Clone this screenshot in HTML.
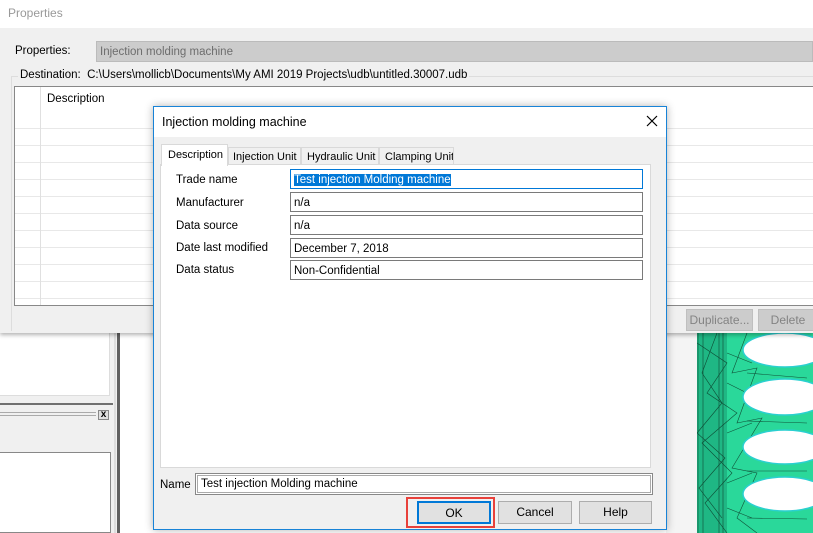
<!DOCTYPE html>
<html><head><style>
*{margin:0;padding:0;box-sizing:border-box}
body{width:813px;height:533px;overflow:hidden;background:#fff;font-family:"Liberation Sans",sans-serif;font-size:11px;color:#000;position:relative}
.a{position:absolute;white-space:nowrap}
.btn{position:absolute;background:#e1e1e1;border:1px solid #adadad;text-align:center;line-height:20px;font-size:12px}
.inp{position:absolute;background:#fff;border:1px solid #7a7a7a;height:20px;font-size:11.5px;line-height:19px;padding-left:3px;white-space:nowrap}
.lbl{position:absolute;font-size:11.5px;white-space:nowrap}
.tab{position:absolute;top:147px;height:18px;border:1px solid #d9d9d9;background:#f0f0f0;font-size:11px;padding:3px 0 0 4px;white-space:nowrap;overflow:hidden}
</style></head><body>
<!-- lower background -->
<div class="a" style="left:0;top:333px;width:118px;height:200px;background:#f0f0f0"></div>
<div class="a" style="left:0;top:333px;width:110px;height:63px;background:#fff;border-right:1px solid #ddd;border-bottom:1px solid #ddd"></div>
<div class="a" style="left:0;top:403px;width:113px;height:2px;background:#707070"></div>
<div class="a" style="left:0;top:412px;width:96px;height:4px;border-top:1px solid #aaa;border-bottom:1px solid #aaa"></div>
<div class="a" style="left:98px;top:410px;width:11px;height:10px;background:#e0e0e0;border:1px solid #888;font-size:10px;line-height:8px;text-align:center;font-weight:bold">x</div>
<div class="a" style="left:0;top:452px;width:111px;height:81px;background:#fff;border:1px solid #888;border-left:none"></div>
<div class="a" style="left:114px;top:333px;width:2px;height:200px;background:#ddd"></div>
<div class="a" style="left:117px;top:333px;width:3px;height:200px;background:#606060"></div>
<div class="a" style="left:666px;top:333px;width:31px;height:200px;background:#f4f4f4"></div>
<svg class="a" style="left:697px;top:333px" width="116" height="200">
<rect x="0" y="0" width="116" height="200" fill="#2ad89a"/>
<rect x="0" y="0" width="30" height="200" fill="#1fb784"/>
<g stroke="#0a3020" stroke-width="0.6" fill="none" opacity="0.8">
<path d="M1 0V200M6 0V200M22 0V200M26 0V200"/>
<path d="M0 10 L30 30 L10 60 L40 80 L5 110 L35 140 L8 170 L30 200 M20 0 L5 40 L25 70 L0 100 L28 125 L2 155 L25 185 M50 0 L35 40 L60 35 L40 90 L65 85 L35 135 L60 140 L40 185 L60 200"/>
<path d="M30 20 L55 30 M30 50 L50 60 M30 100 L55 90 M30 150 L55 140 M30 175 L55 185 M50 40 L110 45 M50 88 L110 90 M50 138 L110 138 M50 185 L110 186"/>
</g>
<g fill="#fff" stroke="#2ad0d0" stroke-width="1.5">
<ellipse cx="88" cy="17" rx="42" ry="17"/>
<ellipse cx="88" cy="64" rx="42" ry="18"/>
<ellipse cx="88" cy="114" rx="42" ry="17"/>
<ellipse cx="88" cy="161" rx="42" ry="17"/>
</g>
</svg>
<!-- properties window -->
<div class="a" style="left:0;top:0;width:813px;height:333px;background:#f0f0f0;box-shadow:0 2px 4px rgba(0,0,0,.3)"></div>
<div class="a" style="left:0;top:0;width:813px;height:28px;background:#fff"></div>
<div class="a" style="left:8px;top:6px;font-size:12px;color:#999">Properties</div>
<div class="lbl" style="left:15px;top:45px">Properties:</div>
<div class="a" style="left:96px;top:41px;width:717px;height:21px;background:#ccc;border:1px solid #bbb;color:#6d6d6d;font-size:11.5px;line-height:20px;padding-left:3px">Injection molding machine</div>
<div class="a" style="left:11px;top:76px;width:802px;height:1px;background:#ddd"></div>
<div class="a" style="left:11px;top:76px;width:1px;height:255px;background:#ddd"></div>
<div class="a" style="left:18px;top:69px;background:#f0f0f0;padding:0 2px;font-size:11.5px">Destination:&nbsp;&nbsp;C:\Users\mollicb\Documents\My AMI 2019 Projects\udb\untitled.30007.udb</div>
<div class="a" style="left:14px;top:86px;width:799px;height:220px;background:#fff;border:1px solid #888;border-right:none;
background-image:repeating-linear-gradient(to bottom,transparent 0,transparent 16px,#e8e8e8 16px,#e8e8e8 17px);background-position:0 25px"></div>
<div class="a" style="left:15px;top:87px;width:798px;height:24px;background:#fff"></div>
<div class="a" style="left:40px;top:87px;width:1px;height:218px;background:#e0e0e0"></div>
<div class="lbl" style="left:47px;top:93px">Description</div>
<div class="btn" style="left:686px;top:309px;width:67px;height:22px;background:#ccc;border-color:#bfbfbf;color:#838383">Duplicate...</div>
<div class="btn" style="left:758px;top:309px;width:60px;height:22px;background:#ccc;border-color:#bfbfbf;color:#838383">Delete</div>
<!-- dialog -->
<div class="a" style="left:153px;top:106px;width:514px;height:424px;background:#f0f0f0;border:1px solid #1883d7;box-shadow:0 0 8px rgba(0,0,0,.3)"></div>
<div class="a" style="left:154px;top:107px;width:512px;height:30px;background:#fff"></div>
<div class="a" style="left:162px;top:115px;font-size:12.5px">Injection molding machine</div>
<svg class="a" style="left:645px;top:114px" width="14" height="14"><path d="M2 2L12 12M12 2L2 12" stroke="#000" stroke-width="1.2"/></svg>
<div class="a" style="left:160px;top:164px;width:491px;height:304px;background:#fff;border:1px solid #d9d9d9"></div>
<div class="tab" style="left:228px;width:73px">Injection Unit</div>
<div class="tab" style="left:301px;width:78px;padding-left:5px">Hydraulic Unit</div>
<div class="tab" style="left:379px;width:75px;padding-left:5px">Clamping Unit</div>
<div class="tab" style="left:161px;top:144px;width:67px;height:22px;border-bottom:none;background:#fff;padding:4px 0 0 6px">Description</div>
<div class="lbl" style="left:176px;top:174px">Trade name</div>
<div class="lbl" style="left:176px;top:197px">Manufacturer</div>
<div class="lbl" style="left:176px;top:220px">Data source</div>
<div class="lbl" style="left:176px;top:242px">Date last modified</div>
<div class="lbl" style="left:176px;top:264px">Data status</div>
<div class="inp" style="left:290px;top:169px;width:353px;border-color:#0078d7;line-height:20px"><span style="background:#0078d7;color:#fff">Test injection Molding machine</span></div>
<div class="inp" style="left:290px;top:192px;width:353px;line-height:20px">n/a</div>
<div class="inp" style="left:290px;top:215px;width:353px;line-height:20px">n/a</div>
<div class="inp" style="left:290px;top:238px;width:353px;line-height:20px">December 7, 2018</div>
<div class="inp" style="left:290px;top:260px;width:353px;line-height:20px">Non-Confidential</div>
<div class="lbl" style="left:160px;top:479px">Name</div>
<div class="inp" style="left:195px;top:473px;width:458px;height:22px;line-height:21px;border:1px solid #888;box-shadow:inset 0 0 0 1px #fff, inset 0 0 0 2px #aaa;padding-left:5px">Test injection Molding machine</div>
<div class="a" style="left:406px;top:497px;width:89px;height:31px;border:2px solid #e8413b"></div>
<div class="btn" style="left:417px;top:501px;width:74px;height:23px;border:2px solid #0078d7">OK</div>
<div class="btn" style="left:498px;top:501px;width:74px;height:23px">Cancel</div>
<div class="btn" style="left:579px;top:501px;width:73px;height:23px">Help</div>
</body></html>
